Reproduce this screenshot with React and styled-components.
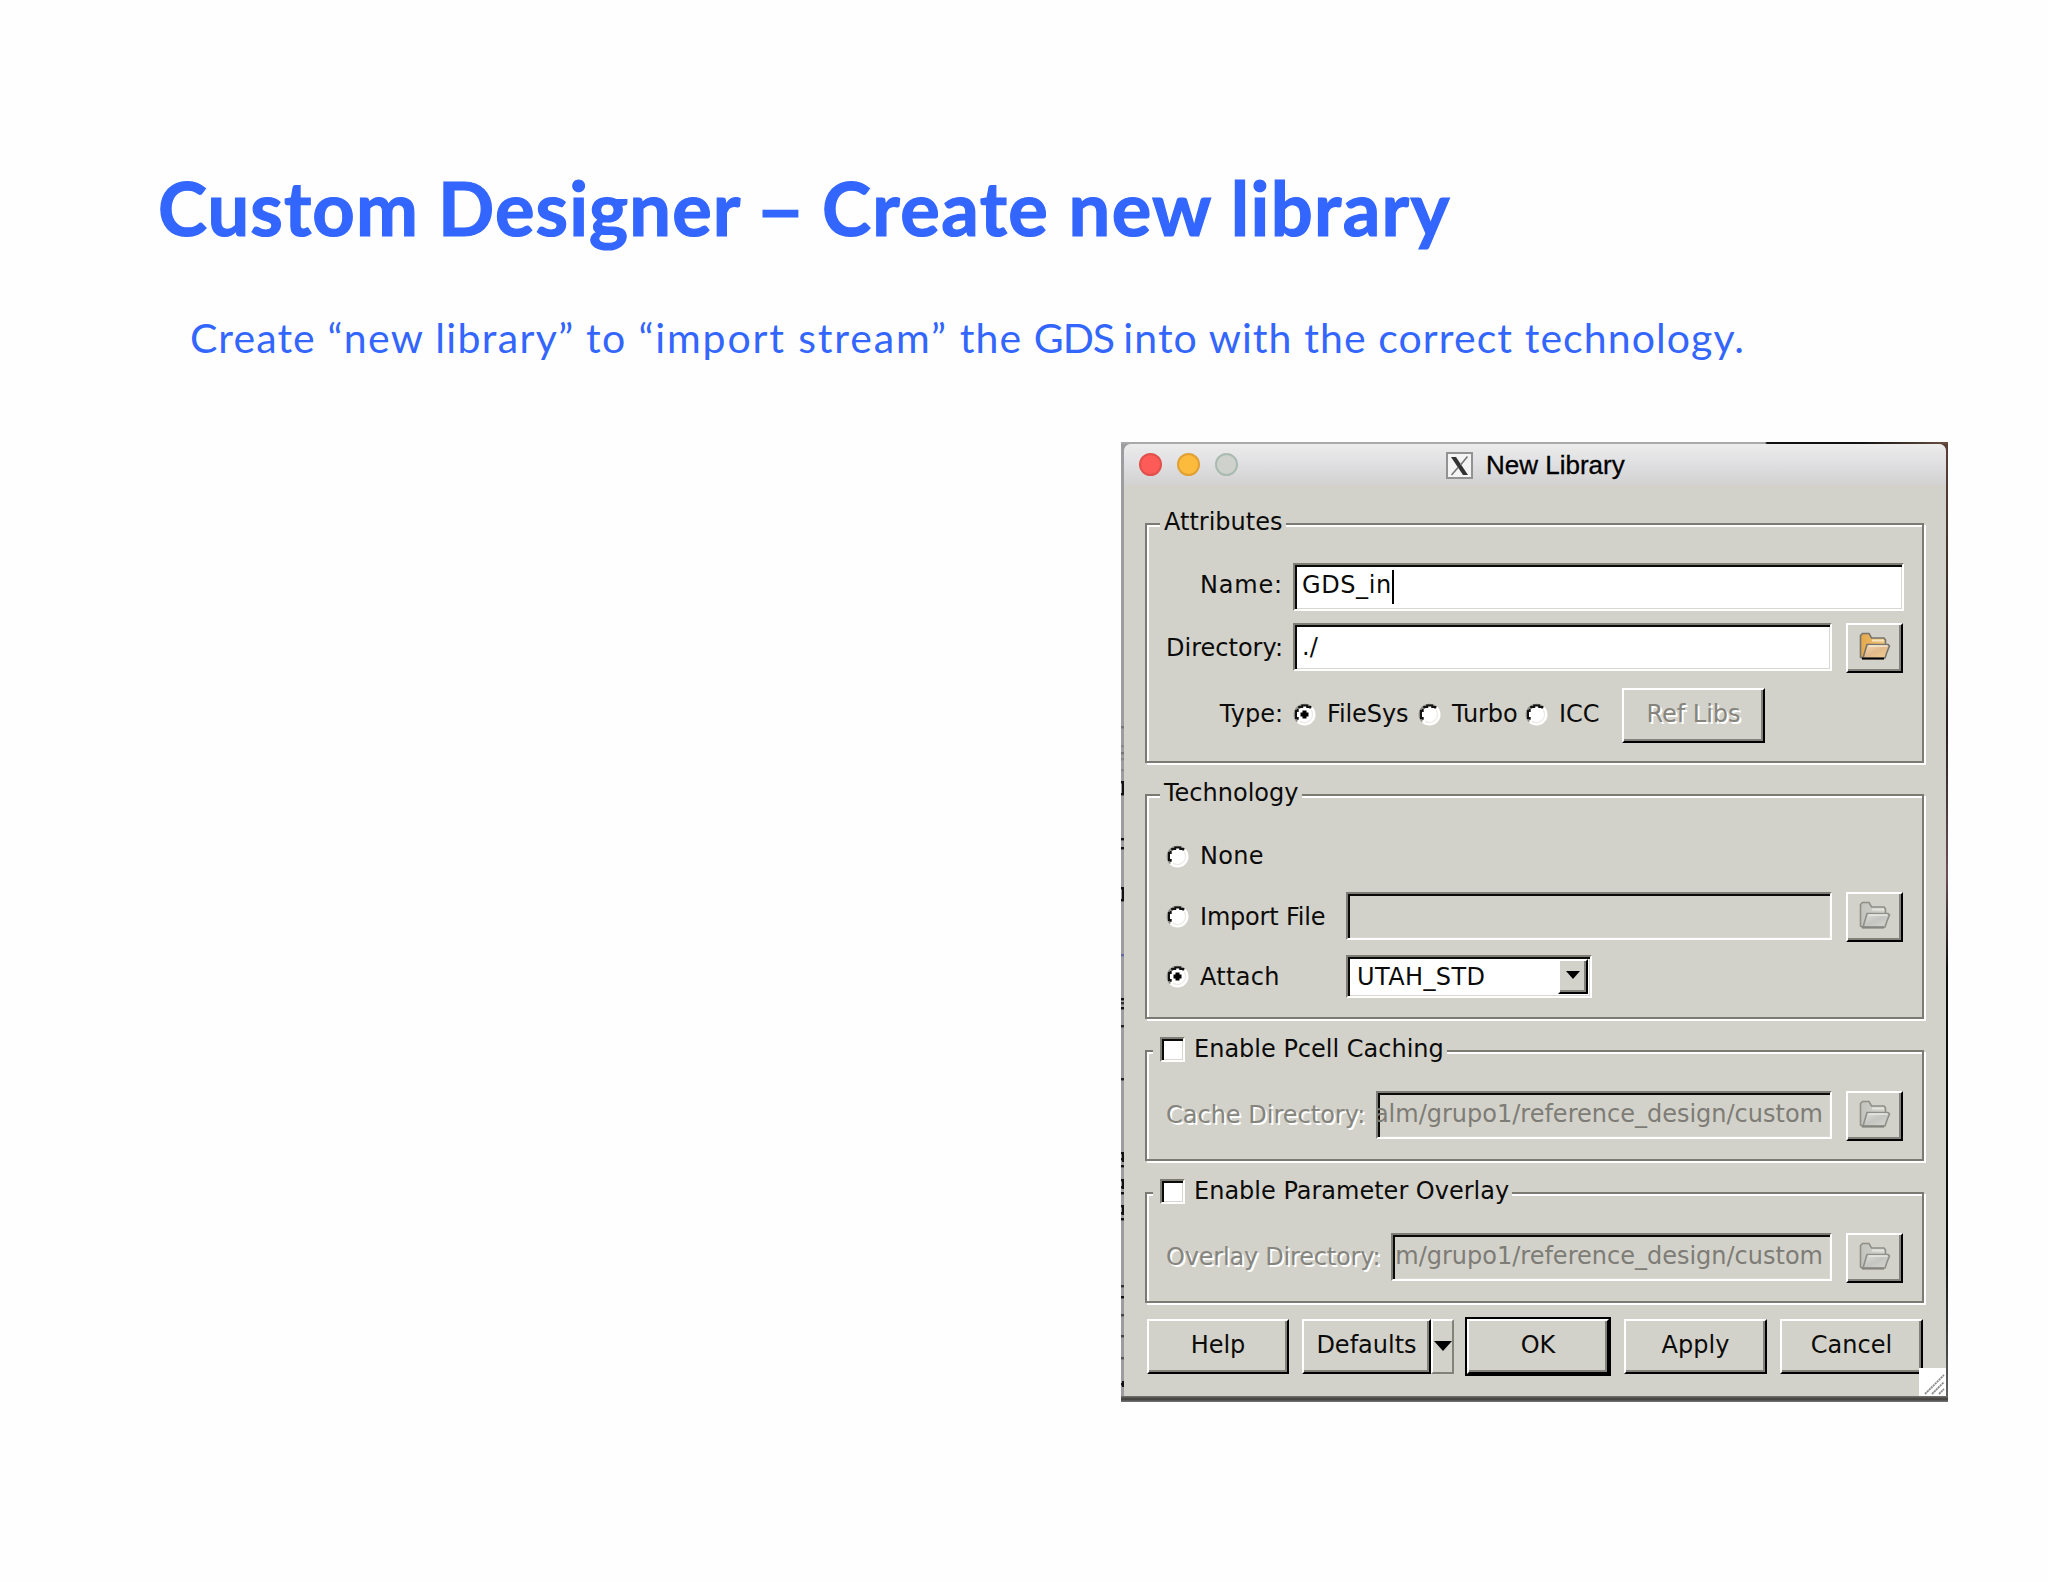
import React, { useState } from 'react';
import styled, { createGlobalStyle, css } from 'styled-components';

const face = '#d3d2ca';

export default function App() {
  const [type, setType] = useState('FileSys');
  const [tech, setTech] = useState('Attach');

  return (
    <>
      <GlobalStyles />
      <Slide>
        <Title>
          Custom Designer <Dash>–</Dash> <Run $spacing={1.4}>Create new library</Run>
        </Title>
        <Subtitle>
          Create <Run $spacing={1.35}>“new library” to </Run>
          <Run $spacing={1.85}>“import stream” </Run>
          the <Run $spacing={-1.1}>GDS </Run>
          into with the correct technology.
        </Subtitle>

        <Backdrop>
          <DesktopEdge />
          <Window>
            <TitleBar>
              <Light $fill='#fc5b57' $edge='#e2504c' />
              <Light $fill='#fcbb3c' $edge='#e0a033' />
              <Light $fill='#cfd2cc' $edge='#a9bbb0' />
              <WindowName>
                <XIcon />
                <span>New Library</span>
              </WindowName>
            </TitleBar>

            <Content>
              <Group $height={240} $pad={38}>
                <Legend>Attributes</Legend>
                <Row $height={48}>
                  <FieldLabel $lift={4} $spacing={0.8}>Name:</FieldLabel>
                  <Field $width={611}>
                    <Value $lift={4} $spacing={0.6}>GDS_in</Value>
                    <Caret />
                  </Field>
                </Row>
                <Row $top={12} $height={50}>
                  <FieldLabel $lift={1}>Directory:</FieldLabel>
                  <Field $width={539}>
                    <Value>./</Value>
                  </Field>
                  <BrowseButton />
                </Row>
                <Row $top={14} $height={56}>
                  <FieldLabel $lift={2}>Type:</FieldLabel>
                  {[['FileSys', 125], ['Turbo', 107], ['ICC', 97]].map(([name, width]) => (
                    <RadioItem key={name} $width={width} onClick={() => setType(name)}>
                      <Radio on={type === name} />
                      <Value $lift={2} $spacing={-0.1}>{name}</Value>
                    </RadioItem>
                  ))}
                  <Button $width={143} $disabled>Ref Libs</Button>
                </Row>
              </Group>

              <Group $height={225} $pad={36}>
                <Legend>Technology</Legend>
                <Row $height={50}>
                  <TechItem onClick={() => setTech('None')}>
                    <Radio on={tech === 'None'} />
                    <Value $lift={2} $spacing={0.3}>None</Value>
                  </TechItem>
                </Row>
                <Row $top={10} $height={50}>
                  <TechItem onClick={() => setTech('Import')}>
                    <Radio on={tech === 'Import'} />
                    <Value $spacing={-0.2}>Import File</Value>
                  </TechItem>
                  <Field $width={486} $disabled />
                  <BrowseButton disabled />
                </Row>
                <Row $top={13} $height={43}>
                  <TechItem onClick={() => setTech('Attach')}>
                    <Radio on={tech === 'Attach'} />
                    <Value $spacing={0.3}>Attach</Value>
                  </TechItem>
                  <Combo>
                    <ComboText>UTAH_STD</ComboText>
                    <ComboButton>
                      <Arrow />
                    </ComboButton>
                  </Combo>
                </Row>
              </Group>

              <Group $height={111} $pad={39}>
                <CheckLegend>
                  <CheckBox />
                  Enable Pcell Caching
                </CheckLegend>
                <Row $height={50}>
                  <DirLabel $width={229}>Cache Directory:</DirLabel>
                  <Field $width={456} $disabled $end>
                    <Value $lift={2}>alm/grupo1/reference_design/custom</Value>
                  </Field>
                  <BrowseButton disabled />
                </Row>
              </Group>

              <Group $height={111} $pad={39}>
                <CheckLegend>
                  <CheckBox />
                  Enable Parameter Overlay
                </CheckLegend>
                <Row $height={50}>
                  <DirLabel $width={244} $spacing={-0.2}>Overlay Directory:</DirLabel>
                  <Field $width={441} $disabled $end>
                    <Value $lift={2}>m/grupo1/reference_design/custom</Value>
                  </Field>
                  <BrowseButton disabled />
                </Row>
              </Group>

              <Buttons>
                <Button $width={142}>Help</Button>
                <Split>
                  <Button $width={129}>Defaults</Button>
                  <SplitArrow>
                    <Arrow $big />
                  </SplitArrow>
                </Split>
                <DefaultRing>
                  <Button $width={142}>OK</Button>
                </DefaultRing>
                <Button $width={143}>Apply</Button>
                <Button $width={143}>Cancel</Button>
              </Buttons>
            </Content>
            <Grip />
          </Window>
        </Backdrop>
      </Slide>
    </>
  );
}

function XIcon() {
  return (
    <svg width='27' height='27' viewBox='0 0 27 27'>
      <rect x='1' y='1' width='25' height='25' fill='#f4f4f4' stroke='#929292' strokeWidth='2' />
      <path d='M5 5h5l12 18h-5z' fill='#333' />
      <path d='M21.5 4.5L14.5 13M12 15.5L5.5 23' stroke='#777' strokeWidth='1.6' fill='none' />
    </svg>
  );
}

function Radio({ on }) {
  return (
    <svg width='23' height='23' viewBox='0 0 23 23'>
      <circle cx='11.5' cy='11.5' r='10' fill='#fff' />
      <path d='M4.4 18.6A10 10 0 0 1 18.6 4.4' fill='none' stroke='#8c8c84' strokeWidth='1.6' />
      <path d='M18.6 4.4A10 10 0 0 1 4.4 18.6' fill='none' stroke='#fff' strokeWidth='2' />
      <path
        d='M4.7 16.8V15H3V8h1.7V5.8M6.2 5.4V4h3V2.6h5V4h3v1.4'
        fill='none'
        stroke='#111'
        strokeWidth='2'
      />
      <path d='M18.2 7A8.1 8.1 0 0 1 7 18.2' fill='none' stroke='#ebeae4' strokeWidth='1.4' />
      {on && <path d='M9.5 7.5h4v2h2v4h-2v2h-4v-2h-2v-4h2z' fill='#000' />}
    </svg>
  );
}

function BrowseButton({ disabled }) {
  const line = disabled ? '#8f8f89' : '#75746d';
  return (
    <Browse>
      <svg width='32' height='29' viewBox='0 0 32 29'>
        <defs>
          <linearGradient id={disabled ? 'backOff' : 'backOn'} x1='0' y1='0' x2='1' y2='0'>
            <stop offset='0' stopColor={disabled ? '#c4c4bf' : '#e5a84a'} />
            <stop offset='1' stopColor={disabled ? '#d2d2cc' : '#efc67e'} />
          </linearGradient>
          <linearGradient id={disabled ? 'flapOff' : 'flapOn'} x1='0' y1='0' x2='1' y2='1'>
            <stop offset='0' stopColor={disabled ? '#dededa' : '#f5dcb8'} />
            <stop offset='.5' stopColor={disabled ? '#c4c4c0' : '#e2b98c'} />
            <stop offset='1' stopColor={disabled ? '#d8d8d3' : '#f3cf8c'} />
          </linearGradient>
        </defs>
        <path
          d='M1.5 25V3.5L3.5 1.5H10L12.5 6H25L26.5 8V13L24 26H3z'
          fill={`url(#${disabled ? 'backOff' : 'backOn'})`}
          stroke={line}
          strokeWidth='1.6'
        />
        <path d='M13 8.5H25' stroke={disabled ? '#e4e4df' : '#f7e3bd'} strokeWidth='2' />
        <path
          d='M8 12.5H29L30.5 14L28 20L26 26H4z'
          fill={`url(#${disabled ? 'flapOff' : 'flapOn'})`}
          stroke={line}
          strokeWidth='1.6'
        />
        <path d='M9.5 14H28.5' stroke={disabled ? '#ebebe7' : '#fbeed8'} strokeWidth='1.4' />
        <path d='M3 26.6H25' stroke={disabled ? '#85857f' : '#000'} strokeWidth='2' />
      </svg>
    </Browse>
  );
}

// slivers of the terminal text that sits behind the left side of the window
const marks = [
  [284, '#777'], [303, '#888'], [310, '#777'], [316, '#888'], [327, '#888'],
  [339, '#111'], [351, '#111'], [396, '#111'], [405, '#111'],
  [445, '#111'], [457, '#111'], [512, '#6468a8'],
  [556, '#111'], [560, '#333'], [565, '#111'], [583, '#222'], [636, '#222'],
  [710, '#111'], [716, '#111'], [723, '#111'], [737, '#111'], [744, '#111'],
  [750, '#111'], [763, '#111'], [770, '#111'], [776, '#111'],
  [843, '#333'], [854, '#111'], [872, '#444'], [893, '#444'], [915, '#555'], [941, '#111'],
];

const stems = [[339, 14], [445, 14], [712, 8], [739, 8], [765, 8], [939, 6]];

function DesktopEdge() {
  return (
    <Edge width='3' height='960' viewBox='0 0 3 960'>
      {marks.map(([y, color]) => (
        <rect key={y} x='0' y={y} width='3' height='2.4' fill={color} />
      ))}
      {stems.map(([y, height]) => (
        <rect key={y} x='1' y={y} width='2' height={height} fill='#111' />
      ))}
    </Edge>
  );
}

function Grip() {
  return (
    <GripSvg width='27' height='28' viewBox='0 0 27 28'>
      <rect width='27' height='28' fill='#fff' />
      <path d='M6 26L25 7M13 26L25 14M20 26L25 21' stroke='#8c8c8c' strokeWidth='1.8' strokeDasharray='2.2 .6' />
    </GripSvg>
  );
}

const GlobalStyles = createGlobalStyle`
  body {
    margin: 0;
    background: #fefefe;
  }
`;

const raised = css`
  border: 2px solid;
  border-color: #fff #000 #000 #fff;
  box-shadow: inset -2px -2px 0 #82817a;
`;

const sunken = css`
  border: 2px solid;
  border-color: #7e7d76 #fff #fff #7e7d76;
  box-shadow: inset 2px 2px 0 #0a0a08, inset -1px -1px 0 #d8d7d0;
`;

const Slide = styled.main`
  box-sizing: border-box;
  width: 2048px;
  height: 1582px;
  padding: 158px 100px 0 158px;
  overflow: hidden;
  display: flex;
  flex-direction: column;
  align-items: flex-start;
  color: #3366ff;
  font-family: Lato, 'Open Sans', sans-serif;
`;

const Title = styled.h1`
  margin: 0;
  font-size: 74px;
  font-weight: 700;
  line-height: 100px;
  letter-spacing: 1.1px;
  white-space: nowrap;
  -webkit-text-stroke: 1.2px #3366ff;
`;

const Dash = styled.span`
  display: inline-block;
  transform: scaleX(1.15);
`;

const Subtitle = styled.p`
  margin: 50px 0 0 32px;
  font-size: 41px;
  line-height: 60px;
  letter-spacing: 1.08px;
  white-space: nowrap;
`;

const Run = styled.span`
  letter-spacing: ${({ $spacing }) => $spacing}px;
`;

const Backdrop = styled.section`
  position: relative;
  box-sizing: border-box;
  width: 827px;
  height: 960px;
  margin: 74px 0 0 963px;
  padding: 2px 2px 6px 3px;
  background:
    linear-gradient(90deg, #a9a9ab 0 644px, #111 646px 740px, #6b5040 827px) top / 100% 2px no-repeat,
    linear-gradient(#77756f, #3f3d3b 50%, #77747a) bottom / 100% 6px no-repeat,
    linear-gradient(#5a4035, #2a2220 30%, #6d5055 45%, #111 55% 85%, #666) right / 10px 100% no-repeat,
    #9d9ca0;
  color: #0b0b0a;
  font-family: 'DejaVu Sans', Verdana, sans-serif;
  font-size: 24px;
  line-height: 28px;
`;

const Edge = styled.svg`
  position: absolute;
  left: 0;
  top: 0;
`;

const Window = styled.div`
  position: relative;
  height: 952px;
  border-radius: 7px 7px 0 0;
  background: ${face};
  overflow: hidden;
`;

const TitleBar = styled.header`
  display: flex;
  align-items: center;
  gap: 15px;
  height: 41px;
  padding-left: 15px;
  background: linear-gradient(#ececec, #e2e1e3 40%, #d3d2d2);
`;

const Light = styled.span`
  box-sizing: border-box;
  width: 23px;
  height: 23px;
  border: 2px solid ${({ $edge }) => $edge};
  border-radius: 50%;
  background: ${({ $fill }) => $fill};
`;

const WindowName = styled.div`
  display: flex;
  align-items: center;
  gap: 13px;
  margin-left: 193px;
  padding-top: 2px;
  color: #000;
  font-family: 'Liberation Sans', Arial, sans-serif;
  font-size: 26px;
  -webkit-text-stroke: 0.3px #000;

  span {
    margin-bottom: 1px;
  }
`;

const Content = styled.div`
  padding: 38px 22px 0 21px;
`;

const Group = styled.section`
  position: relative;
  box-sizing: border-box;
  height: ${({ $height }) => $height}px;
  margin-bottom: 31px;
  padding-top: ${({ $pad }) => $pad}px;
  border: 2px solid #7b7a73;
  box-shadow: 2px 2px 0 #fff, inset 2px 2px 0 #fff;
`;

const Legend = styled.div`
  position: absolute;
  top: -17px;
  left: 13px;
  padding: 0 4px;
  background: ${face};
`;

const CheckLegend = styled(Legend)`
  display: flex;
  align-items: center;
  gap: 9px;
  left: 6px;
  padding: 0 3px 0 7px;
`;

const CheckBox = styled.span`
  box-sizing: border-box;
  width: 25px;
  height: 25px;
  margin-top: 1px;
  background: #fff;
  ${sunken}
`;

const Row = styled.div`
  display: flex;
  align-items: center;
  height: ${({ $height }) => $height}px;
  margin-top: ${({ $top }) => $top || 0}px;
`;

const Value = styled.span`
  margin-bottom: ${({ $lift }) => $lift || 0}px;
  letter-spacing: ${({ $spacing }) => $spacing || 0}px;
  white-space: nowrap;
`;

const FieldLabel = styled(Value)`
  width: 136px;
  margin-right: 10px;
  text-align: right;
`;

const DirLabel = styled.span`
  box-sizing: border-box;
  width: ${({ $width }) => $width}px;
  padding-left: 19px;
  margin-bottom: 2px;
  color: #85847d;
  letter-spacing: ${({ $spacing }) => $spacing || 0}px;
  text-shadow: 2px 2px 0 #fff;
  white-space: nowrap;
`;

const Field = styled.div`
  box-sizing: border-box;
  display: flex;
  align-items: center;
  align-self: flex-start;
  justify-content: ${({ $end }) => ($end ? 'flex-end' : 'flex-start')};
  width: ${({ $width }) => $width}px;
  height: 48px;
  padding: 0 7px;
  overflow: hidden;
  background: ${({ $disabled }) => ($disabled ? face : '#fff')};
  color: ${({ $disabled }) => ($disabled ? '#7d7c76' : '#0b0b0a')};
  ${sunken}
`;

const Caret = styled.i`
  width: 2px;
  height: 34px;
  background: #000;
`;

const RadioItem = styled.label`
  display: flex;
  align-items: center;
  gap: 11px;
  width: ${({ $width }) => $width}px;

  svg {
    margin-bottom: 1px;
  }
`;

const TechItem = styled(RadioItem)`
  box-sizing: border-box;
  width: 199px;
  padding-left: 19px;
`;

const Browse = styled.button`
  box-sizing: border-box;
  display: flex;
  align-items: center;
  justify-content: center;
  width: 57px;
  height: 50px;
  margin-left: 14px;
  padding: 0 0 4px;
  background: ${face};
  ${raised}
`;

const Button = styled.button`
  box-sizing: border-box;
  width: ${({ $width }) => $width}px;
  height: 55px;
  padding: 0 0 4px;
  background: ${face};
  color: #0b0b0a;
  font: inherit;
  ${raised}
  ${({ $disabled }) => $disabled && css`
    padding-bottom: 2px;
    color: #85847d;
    text-shadow: 2px 2px 0 #fff;
  `}
`;

const Combo = styled.div`
  box-sizing: border-box;
  display: flex;
  align-items: stretch;
  justify-content: space-between;
  width: 246px;
  height: 43px;
  padding: 2px;
  background: #fff;
  ${sunken}
`;

const ComboText = styled.span`
  padding: 4px 0 0 7px;
  letter-spacing: 0.4px;
`;

const ComboButton = styled.span`
  box-sizing: border-box;
  display: flex;
  align-items: center;
  justify-content: center;
  width: 30px;
  padding-bottom: 3px;
  background: ${face};
  ${raised}
`;

const Arrow = styled.i`
  border: solid transparent;
  border-top-color: #000;
  border-width: ${({ $big }) => ($big ? '10px 9px 0' : '8px 7px 0')};
`;

const Buttons = styled.footer`
  display: flex;
  align-items: center;
  margin: -17px 0 0 2px;
  gap: 13px;
`;

const Split = styled.div`
  display: flex;
  align-items: stretch;
  margin-right: -2px;
`;

const SplitArrow = styled.span`
  box-sizing: border-box;
  display: flex;
  align-items: center;
  justify-content: center;
  width: 23px;
  padding-bottom: 2px;
  border: 2px solid;
  border-color: #fff #82817a #82817a #fff;
`;

const DefaultRing = styled.div`
  display: flex;
  border: 2px solid #000;
`;

const GripSvg = styled.svg`
  position: absolute;
  right: 0;
  bottom: 0;
`;
